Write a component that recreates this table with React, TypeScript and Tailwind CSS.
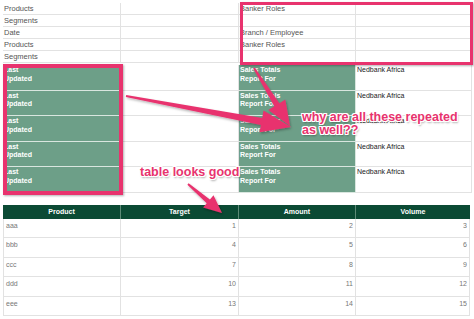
import React from "react";

const topRows: [string, string][] = [
  ["Products", "Banker Roles"],
  ["Segments", ""],
  ["Date", "Branch / Employee"],
  ["Products", "Banker Roles"],
  ["Segments", ""],
];

const tableRows = [
  ["aaa", "1", "2", "3"],
  ["bbb", "4", "5", "6"],
  ["ccc", "7", "8", "9"],
  ["ddd", "10", "11", "12"],
  ["eee", "13", "14", "15"],
];

// tapered arrow polygon: thin tail, wide head
function arrowPoints(
  x1: number,
  y1: number,
  x2: number,
  y2: number,
  w0: number,
  w1: number,
  hl: number,
  hw: number
) {
  const dx = x2 - x1;
  const dy = y2 - y1;
  const len = Math.hypot(dx, dy);
  const ux = dx / len;
  const uy = dy / len;
  const nx = -uy;
  const ny = ux;
  const bx = x2 - ux * hl;
  const by = y2 - uy * hl;
  const pts = [
    [x1 + (nx * w0) / 2, y1 + (ny * w0) / 2],
    [bx + (nx * w1) / 2, by + (ny * w1) / 2],
    [bx + (nx * hw) / 2, by + (ny * hw) / 2],
    [x2, y2],
    [bx - (nx * hw) / 2, by - (ny * hw) / 2],
    [bx - (nx * w1) / 2, by - (ny * w1) / 2],
    [x1 - (nx * w0) / 2, y1 - (ny * w0) / 2],
  ];
  return pts.map((p) => `${p[0].toFixed(1)},${p[1].toFixed(1)}`).join(" ");
}

const cell = "border-b border-r border-[#e2e2e2] overflow-hidden whitespace-nowrap";
const note =
  "absolute font-bold text-[12.5px] leading-[13px] text-[#e8336e] whitespace-nowrap [text-shadow:1px_0_#fff,-1px_0_#fff,0_1px_#fff,0_-1px_#fff,1px_1px_#fff,-1px_-1px_#fff,1px_-1px_#fff,-1px_1px_#fff,1px_2px_2px_rgba(0,0,0,0.35)]";

export default function App() {
  return (
    <div className="relative w-[474px] h-[319px] overflow-hidden bg-white font-['Liberation_Sans',Arial,sans-serif]">
      <div className="pl-[3px] pt-[3px]">
        {/* top parameter block */}
        <div className="grid grid-cols-[118px_118px_117px_116px]">
          {topRows.map(([a, b], i) => (
            <React.Fragment key={i}>
              <div className={`${cell} h-[12px] pl-[1px] text-[7.5px] leading-[12px] text-[#555]`}>{a}</div>
              <div className={`${cell} h-[12px]`} />
              <div className={`${cell} h-[12px] pl-[1px] text-[7.5px] leading-[12px] text-[#555]`}>{b}</div>
              <div className={`${cell} h-[12px]`} />
            </React.Fragment>
          ))}
        </div>

        {/* repeated header cells */}
        <div className="grid grid-cols-[118px_118px_117px_116px] mt-[2px]">
          {[0, 1, 2, 3, 4].map((i) => (
            <React.Fragment key={i}>
              <div className="h-[25.5px] bg-[#6d9f88] border-b border-r border-[#d9e6df] pl-[1px] pt-[1px] text-[7px] leading-[8.5px] font-bold text-white">
                Last
                <br />
                Updated
              </div>
              <div className={`${cell} h-[25.5px]`} />
              <div className="h-[25.5px] bg-[#6d9f88] border-b border-r border-[#d9e6df] pl-[1px] pt-[1px] text-[7px] leading-[8.5px] font-bold text-white">
                Sales Totals
                <br />
                Report For
              </div>
              <div className={`${cell} h-[25.5px] pl-[1px] pt-[1px] text-[7px] leading-[8.5px] text-[#222]`}>
                Nedbank Africa
              </div>
            </React.Fragment>
          ))}
        </div>

        {/* data table */}
        <div className="mt-[12px] w-[467px]">
          <div className="grid grid-cols-[118px_118px_117px_114px] bg-[#0b4a34] h-[14px]">
            {["Product", "Target", "Amount", "Volume"].map((h, i) => (
              <div
                key={h}
                className={`text-center text-[7px] leading-[14px] font-bold text-white ${i < 3 ? "border-r border-[#5d8a77]" : ""}`}
              >
                {h}
              </div>
            ))}
          </div>
          {tableRows.map((r) => (
            <div key={r[0]} className="grid grid-cols-[118px_118px_117px_114px]">
              {r.map((v, i) => (
                <div
                  key={i}
                  className={`h-[19.5px] border-b border-[#e2e2e2] pt-[3px] text-[7px] leading-[8px] text-[#777] ${
                    i === 0 ? "pl-[2px] border-l" : "text-right pr-[2px]"
                  } border-r`}
                >
                  {v}
                </div>
              ))}
            </div>
          ))}
        </div>
      </div>

      {/* annotation boxes */}
      <div className="absolute left-[240px] top-[2px] w-[233px] h-[63px] border-[3px] border-[#e8336e] shadow-[1px_1px_2px_rgba(0,0,0,0.3)]" />
      <div className="absolute left-[3px] top-[64px] w-[120px] h-[131px] border-[4px] border-[#e8336e] shadow-[1px_1px_2px_rgba(0,0,0,0.3)]" />

      <svg className="absolute left-0 top-0" width={474} height={319} viewBox="0 0 474 319">
        <defs>
          <filter id="sh" x="-10%" y="-10%" width="130%" height="130%">
            <feDropShadow dx="1" dy="1.5" stdDeviation="1" floodColor="#000" floodOpacity="0.3" />
          </filter>
        </defs>
        <g fill="#e8336e" filter="url(#sh)">
          <polygon points={arrowPoints(126, 96, 291, 127, 2, 7, 30, 22)} />
          <polygon points={arrowPoints(254, 68, 290, 126, 2, 6, 25, 20)} />
          <polygon points={arrowPoints(188, 184, 222, 213, 2, 5, 18, 16)} />
        </g>
      </svg>

      <div className={`${note} left-[302px] top-[111px]`}>
        why are all these repeated
        <br />
        as well??
      </div>
      <div className={`${note} left-[140px] top-[166px]`}>table looks good</div>
    </div>
  );
}
